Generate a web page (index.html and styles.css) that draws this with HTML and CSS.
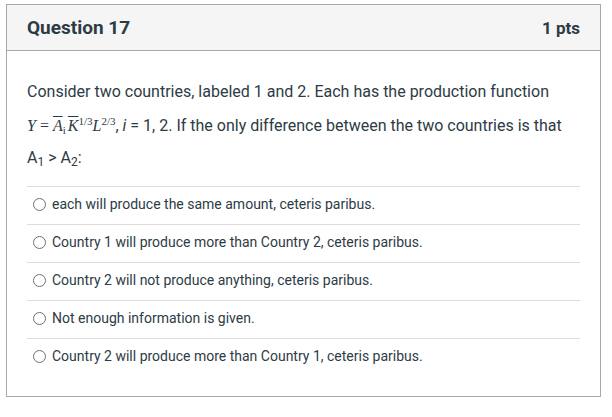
FILE: index.html
```html
<!DOCTYPE html>
<html>
<head>
<meta charset="utf-8">
<link rel="stylesheet" href="styles.css">
</head>
<body>
<div class="card">
  <div class="header">
    <span class="title">Question 17</span>
    <span class="pts">1 pts</span>
  </div>
  <div class="body">
    <p class="question">Consider two countries, labeled 1 and 2. Each has the production function<br><span class="math"><i>Y</i> = <span class="bar"><i>A</i></span><sub class="msub">i</sub><span class="bar kbar"><i>K</i></span><sup class="msup">1/3</sup><i>L</i><sup class="msup">2/3</sup></span>, <i>i</i> = 1, 2. If the only difference between the two countries is that<br><span class="aa">A<sub>1</sub> &gt; A<sub>2</sub>:</span></p>
    <div class="answers">
      <label class="answer"><span class="radio"></span>each will produce the same amount, ceteris paribus.</label>
      <label class="answer"><span class="radio"></span>Country 1 will produce more than Country 2, ceteris paribus.</label>
      <label class="answer"><span class="radio"></span>Country 2 will not produce anything, ceteris paribus.</label>
      <label class="answer"><span class="radio"></span>Not enough information is given.</label>
      <label class="answer"><span class="radio"></span>Country 2 will produce more than Country 1, ceteris paribus.</label>
    </div>
  </div>
</div>
</body>
</html>
```
FILE: styles.css
```css
* { box-sizing: border-box; }
body {
  margin: 0;
  padding: 4px 11px 0 6px;
  background: #fff;
  font-family: Roboto, "Liberation Sans", sans-serif;
  color: #2d3b45;
}
.card {
  width: 595px;
  height: 393px;
  border: 1px solid #a9a9a9;
}
.header {
  height: 46px;
  background: #f5f5f5;
  border-bottom: 1px solid #a9a9a9;
  display: flex;
  align-items: center;
  justify-content: space-between;
  padding: 0 20px 0 20px;
}
.title {
  font-size: 19px;
  font-weight: 700;
}
.pts {
  font-size: 17px;
  font-weight: 700;
}
.body {
  padding: 27px 20px 0 20px;
}
.question {
  margin: 0;
  font-size: 16px;
  line-height: 28.5px;
}
.math {
  font-family: "Liberation Serif", serif;
  font-size: 16px;
}
.bar {
  text-decoration: overline;
}
.kbar {
  margin-left: 2px;
}
.msub {
  font-size: 11px;
  vertical-align: -3px;
}
.msup {
  font-size: 11px;
  vertical-align: 6px;
}
.aa sub {
  font-size: 12px;
  vertical-align: -3px;
}
.answers {
  margin-top: 9px;
}
.answer {
  display: flex;
  align-items: center;
  height: 38px;
  border-top: 1px solid #dddddd;
  font-size: 14px;
  padding-left: 6px;
  padding-bottom: 2px;
}
.radio {
  width: 13px;
  height: 13px;
  border: 1px solid #707070;
  border-radius: 50%;
  margin-right: 6px;
  flex: none;
}
```
